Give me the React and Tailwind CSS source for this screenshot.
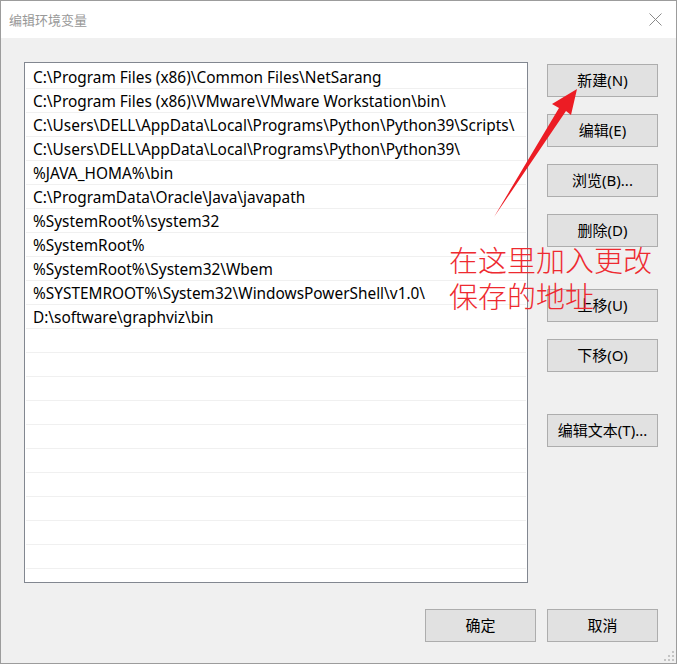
import React from 'react';

const paths = [
  'C:\\Program Files (x86)\\Common Files\\NetSarang',
  'C:\\Program Files (x86)\\VMware\\VMware Workstation\\bin\\',
  'C:\\Users\\DELL\\AppData\\Local\\Programs\\Python\\Python39\\Scripts\\',
  'C:\\Users\\DELL\\AppData\\Local\\Programs\\Python\\Python39\\',
  '%JAVA_HOMA%\\bin',
  'C:\\ProgramData\\Oracle\\Java\\javapath',
  '%SystemRoot%\\system32',
  '%SystemRoot%',
  '%SystemRoot%\\System32\\Wbem',
  '%SYSTEMROOT%\\System32\\WindowsPowerShell\\v1.0\\',
  'D:\\software\\graphviz\\bin',
];

const rows = [...paths, ...Array(10).fill('')];

const sideButtons = [
  { label: '新建(N)', mt: 'mt-0' },
  { label: '编辑(E)', mt: 'mt-[17px]' },
  { label: '浏览(B)...', mt: 'mt-[17px]' },
  { label: '删除(D)', mt: 'mt-[17px]' },
  { label: '上移(U)', mt: 'mt-[42px]' },
  { label: '下移(O)', mt: 'mt-[17px]' },
  { label: '编辑文本(T)...', mt: 'mt-[42px]' },
];

function WinButton({ label, className = '' }) {
  return (
    <button className={`w-[111px] h-[33px] bg-[#e1e1e1] border border-[#adadad] text-[15px] text-black flex items-center justify-center ${className}`}>
      {label}
    </button>
  );
}

export default function App() {
  return (
    <div
      className="relative w-[677px] h-[664px] border border-[#9c9c9c] flex flex-col overflow-hidden"
      style={{ fontFamily: '"Noto Sans", "Noto Sans CJK SC", sans-serif' }}
    >
      {/* title bar */}
      <div className="h-[37px] bg-white flex items-center justify-between pl-[8px] pr-[14px]">
        <span className="text-[13px] text-[#999999] font-['Noto_Sans_CJK_SC']">编辑环境变量</span>
        <svg width="13" height="13" viewBox="0 0 13 13">
          <path d="M0.5 0.5 L12.5 12.5 M12.5 0.5 L0.5 12.5" stroke="#8a8a8a" strokeWidth="1" />
        </svg>
      </div>

      {/* body */}
      <div className="flex-1 bg-[#f0f0f0] pt-[24px] pl-[23px] pr-[18px] flex flex-col">
        <div className="flex gap-[19px]">
          <div className="w-[504px] h-[521px] border border-[#828790] bg-white pt-[2px] px-[1px] overflow-hidden">
            {rows.map((p, i) => (
              <div
                key={i}
                className="h-[24px] border-b border-[#f0f0f0] pl-[7px] pt-[3px] flex items-center text-[15.4px] text-black whitespace-nowrap"
              >
                {p}
              </div>
            ))}
          </div>
          <div className="flex flex-col pt-[2px]">
            {sideButtons.map(b => (
              <WinButton key={b.label} label={b.label} className={b.mt} />
            ))}
          </div>
        </div>

        <div className="flex justify-end gap-[11px] mt-[26px]">
          <WinButton label="确定" />
          <WinButton label="取消" />
        </div>
      </div>

      {/* resize grip */}
      <svg className="absolute right-[1px] bottom-[1px]" width="12" height="12" viewBox="0 0 12 12">
        {[[10, 2], [10, 6], [6, 6], [10, 10], [6, 10], [2, 10]].map(([x, y]) => (
          <rect key={`${x}-${y}`} x={x - 1} y={y - 1} width="2" height="2" fill="#c4c4c4" />
        ))}
      </svg>

      {/* annotation arrow */}
      <svg className="absolute left-0 top-0 pointer-events-none" width="677" height="664">
        <polygon
          points="576,88 551,103 558,107 493,216 565,110 570,114"
          fill="#ec1c24"
        />
      </svg>

      {/* annotation text */}
      <div className="absolute left-[448px] top-[240px] text-[29px] leading-[36px] font-light text-[#ee2a30] font-['Noto_Sans_CJK_SC'] pointer-events-none">
        <div>在这里加入更改</div>
        <div>保存的地址</div>
      </div>
    </div>
  );
}
